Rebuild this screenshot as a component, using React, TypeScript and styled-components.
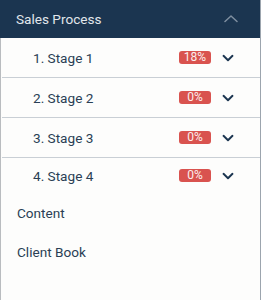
import * as React from "react";
import styled, { createGlobalStyle } from "styled-components";

const GlobalStyle = createGlobalStyle`
  html, body {
    margin: 0;
    padding: 0;
    background: #ffffff;
  }
  body {
    font-family: Roboto, "Liberation Sans", sans-serif;
  }
`;

const Panel = styled.nav`
  width: 259px;
  height: 300px;
  background: #fdfdfc;
  border-left: 1px solid #b9bcbf;
  border-right: 1px solid #9ca5ae;
  display: flex;
  flex-direction: column;
`;

const Header = styled.div`
  height: 38px;
  background: #1b3550;
  display: flex;
  align-items: center;
  justify-content: space-between;
  padding: 0 22px 0 16px;
  margin-left: -1px;
  color: #e1e6eb;
  font-size: 13.6px;
`;

const StageList = styled.ul`
  list-style-type: none;
  margin: 0;
  padding: 0;
`;

const StageRow = styled.li<{ $last?: boolean }>`
  height: ${(p) => (p.$last ? "35px" : "39px")};
  display: flex;
  align-items: center;
  padding: 0 25px 0 31px;
  margin-left: 1px;
  border-bottom: ${(p) => (p.$last ? "none" : "1px solid #c9cfd5")};
  color: #2a3f55;
  font-size: 13.6px;
`;

const StageName = styled.span`
  flex: 1;
`;

const Badge = styled.span`
  width: 32px;
  height: 13px;
  border-radius: 3px;
  background: #d9534f;
  color: #fbeeee;
  font-size: 12px;
  line-height: 13px;
  text-align: center;
  margin-right: 10px;
`;

const Link = styled.a`
  height: 39px;
  display: flex;
  align-items: center;
  padding-left: 16px;
  color: #2a3f55;
  font-size: 13.6px;
  text-decoration: none;
`;

const Chevron = ({ up, color }: { up?: boolean; color: string }) => (
  <svg width="14" height="10" viewBox="0 0 14 10">
    <path
      d={up ? "M1 7.5 L7 2 L13 7.5" : "M2.5 2.8 L7 7.2 L11.5 2.8"}
      fill="none"
      stroke={color}
      strokeWidth={up ? 1.5 : 1.9}
      strokeLinecap="round"
      strokeLinejoin="round"
    />
  </svg>
);

const stages = [
  { name: "1. Stage 1", pct: "18%" },
  { name: "2. Stage 2", pct: "0%" },
  { name: "3. Stage 3", pct: "0%" },
  { name: "4. Stage 4", pct: "0%" },
];

const App = () => (
  <>
    <GlobalStyle />
    <Panel>
      <Header>
        <span>Sales Process</span>
        <Chevron up color="#7f8fa0" />
      </Header>
      <StageList>
        {stages.map((s, i) => (
          <StageRow key={s.name} $last={i === stages.length - 1}>
            <StageName>{s.name}</StageName>
            <Badge>{s.pct}</Badge>
            <Chevron color="#1b3550" />
          </StageRow>
        ))}
      </StageList>
      <Link href="#">Content</Link>
      <Link href="#">Client Book</Link>
    </Panel>
  </>
);

export default App;
